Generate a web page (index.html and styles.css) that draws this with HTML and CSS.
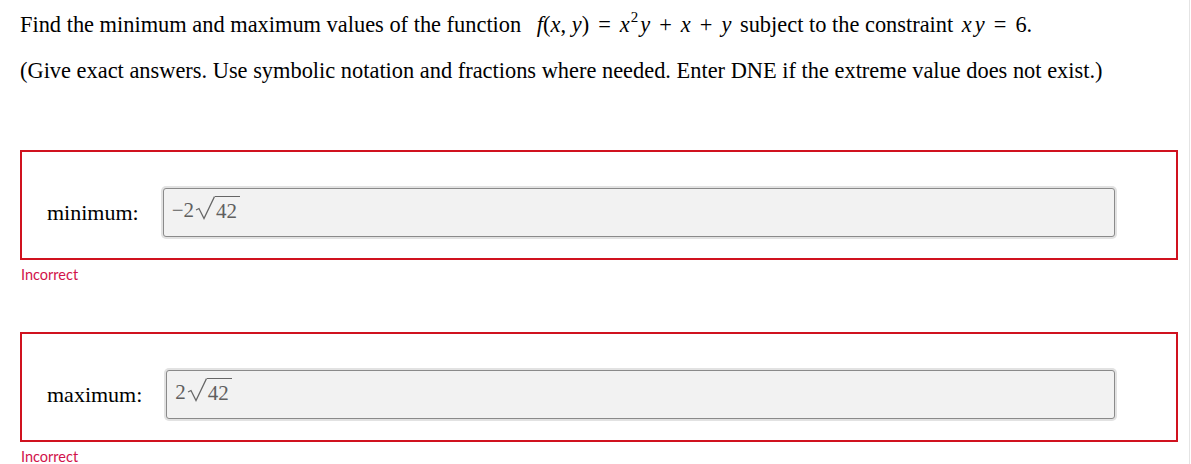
FILE: index.html
```html
<!DOCTYPE html>
<html lang="en">
<head>
  <meta charset="UTF-8">
  <title>Lagrange multipliers</title>
  <link rel="stylesheet" href="styles.css">
</head>
<body>
  <div class="page">
    <p class="question">
      Find the minimum and maximum values of the function
      <span class="math first"><i>f</i>(<i>x</i>, <i>y</i>)<span class="op">=</span><i>x</i><sup>2</sup><i>y</i><span class="op">+</span><i>x</i><span class="op">+</span><i>y</i></span>
      subject to the constraint <span class="math last"><i>x</i><i class="y">y</i><span class="op">=</span>6</span>.
    </p>
    <p class="question">(Give exact answers. Use symbolic notation and fractions where needed. Enter DNE if the extreme value does not exist.)</p>

    <div class="answer">
      <div class="answer-box">
        <label class="answer-label">minimum:</label>
        <div class="answer-input">
          <span class="sym">−2</span>
          <svg class="root" width="20" height="24" viewBox="0 0 20 24"><path d="M1 14 L4 12.5 L9 22.5 L19.5 0.5" fill="none" stroke="#666" stroke-width="1.3"/></svg>
          <span class="radicand">42</span>
        </div>
      </div>
      <div class="feedback">Incorrect</div>
    </div>

    <div class="answer">
      <div class="answer-box">
        <label class="answer-label">maximum:</label>
        <div class="answer-input">
          <span class="sym">2</span>
          <svg class="root" width="20" height="24" viewBox="0 0 20 24"><path d="M1 14 L4 12.5 L9 22.5 L19.5 0.5" fill="none" stroke="#666" stroke-width="1.3"/></svg>
          <span class="radicand">42</span>
        </div>
      </div>
      <div class="feedback">Incorrect</div>
    </div>
  </div>
</body>
</html>
```

FILE: styles.css
```css
body { margin:0; padding:0; background:#fff; font-family: "Liberation Serif", "Times New Roman", serif; color:#000; }
.page { width:1190px; min-height:464px; border-right:1px solid #e4e4e4; padding:0 0 0 20px; box-sizing:border-box; overflow:hidden; }
.question { margin:0; font-size:22.4px; line-height:26px; padding-top:12px; }
.question + .question { padding-top:20px; }
.math i { font-style:italic; }
.math.first { margin-left:10px; margin-right:3px; }
.math.last { margin-left:3px; }
.math .y { margin-left:3px; }
.math sup { font-size:15px; line-height:0; vertical-align:10px; margin-left:1px; margin-right:2px; }
.op { margin:0 9px; }

.answer { margin-top:66px; }
.answer + .answer { margin-top:50px; }
.answer-box { width:1158px; height:110px; box-sizing:border-box; border:2px solid #d0121f; display:flex; align-items:center; padding:15px 61px 0 25px; }
.answer-label { font-size:22px; flex:none; margin-right:24px; }
.answer-input { flex:1; height:49px; box-sizing:border-box; border:1px solid #8a8a8a; border-radius:3px; background:#f2f2f2; box-shadow:0 0 0 2px #e2e2e2; padding:6px 0 0 8px; font-size:21px; line-height:24px; color:#5f5f5f; display:flex; align-items:flex-start; }
.answer-input .sym { padding-top:3px; }
.answer-input .root { flex:none; margin:1px 0 0 1px; }
.answer-input .radicand { border-top:1.3px solid #666; margin-top:1px; padding:2px 3px 0 1px; }
.feedback { font-family: Lato, "Open Sans", sans-serif; font-size:14.5px; line-height:15px; color:#d1124a; margin-top:7px; margin-left:1px; }
```
